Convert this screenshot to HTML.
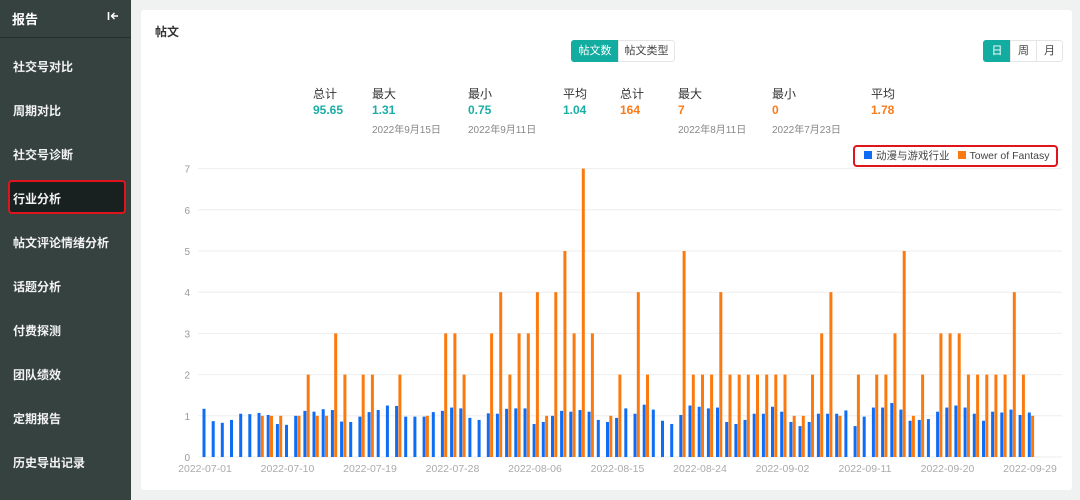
<!DOCTYPE html><html><head><meta charset="utf-8"><style>
*{margin:0;padding:0;box-sizing:border-box}
body{width:1080px;height:500px;overflow:hidden;background:#f0f2f1;font-family:"Liberation Sans","Noto Sans CJK SC",sans-serif;position:relative}
.sb{position:absolute;left:0;top:0;width:131px;height:500px;background:#364240;color:#fff}
.sb .h{position:absolute;left:12px;top:9px;font-size:13px;font-weight:bold}
.sb .ln{position:absolute;left:0;top:37px;width:131px;height:1px;background:#25302e}
.mi{position:absolute;left:13px;font-size:12px;font-weight:bold;color:#f2f2f2}
.act{position:absolute;left:8px;top:180px;width:118px;height:34px;background:#18211f;border:2px solid #e0141c;border-radius:4px}
.card{position:absolute;left:141px;top:10px;width:931px;height:480px;background:#fff;border-radius:3px}
.t{position:absolute;font-size:12px;color:#333}
.btn{position:absolute;top:40px;height:22px;font-size:11px;line-height:20px;text-align:center;border:1px solid #e3e6e5;color:#444;background:#fff}
.on{background:#13aca0;color:#fff;border-color:#13aca0}
.lab{position:absolute;top:85px;font-size:12px;color:#333}
.val{position:absolute;top:103px;font-size:12px;font-weight:bold}
.dt{position:absolute;top:121px;font-size:10px;color:#888}
.b{color:#1aaea5}.o{color:#fb7a1a}
</style></head><body>
<div class="sb"><div class="h">报告</div>
<svg style="position:absolute;left:107px;top:11px" width="12" height="10"><path d="M1.5 1v8" stroke="#fff" stroke-width="1.6"/><path d="M11 5H4.5M7.5 2L4.5 5l3 3" stroke="#fff" stroke-width="1.5" fill="none"/></svg>
<div class="ln"></div>
<div class="act"></div>
<div class="mi" style="top:58px">社交号对比</div>
<div class="mi" style="top:102px">周期对比</div>
<div class="mi" style="top:146px">社交号诊断</div>
<div class="mi" style="top:190px">行业分析</div>
<div class="mi" style="top:234px">帖文评论情绪分析</div>
<div class="mi" style="top:278px">话题分析</div>
<div class="mi" style="top:322px">付费探测</div>
<div class="mi" style="top:366px">团队绩效</div>
<div class="mi" style="top:410px">定期报告</div>
<div class="mi" style="top:454px">历史导出记录</div>
</div>
<div class="card"></div>
<div class="t" style="left:155px;top:23px;font-weight:bold">帖文</div>
<div class="btn on" style="left:571px;width:48px;border-radius:3px 0 0 3px">帖文数</div>
<div class="btn" style="left:618px;width:57px;border-radius:0 3px 3px 0">帖文类型</div>
<div class="btn on" style="left:983px;width:28px;border-radius:3px 0 0 3px">日</div>
<div class="btn" style="left:1010px;width:27px">周</div>
<div class="btn" style="left:1036px;width:27px;border-radius:0 3px 3px 0">月</div>
<div class="lab" style="left:313px">总计</div><div class="val b" style="left:313px">95.65</div>
<div class="lab" style="left:372px">最大</div><div class="val b" style="left:372px">1.31</div><div class="dt" style="left:372px">2022年9月15日</div>
<div class="lab" style="left:468px">最小</div><div class="val b" style="left:468px">0.75</div><div class="dt" style="left:468px">2022年9月11日</div>
<div class="lab" style="left:563px">平均</div><div class="val b" style="left:563px">1.04</div>
<div class="lab" style="left:620px">总计</div><div class="val o" style="left:620px">164</div>
<div class="lab" style="left:678px">最大</div><div class="val o" style="left:678px">7</div><div class="dt" style="left:678px">2022年8月11日</div>
<div class="lab" style="left:772px">最小</div><div class="val o" style="left:772px">0</div><div class="dt" style="left:772px">2022年7月23日</div>
<div class="lab" style="left:871px">平均</div><div class="val o" style="left:871px">1.78</div>
<div style="position:absolute;left:853px;top:145px;width:205px;height:22px;border:2px solid #e0141c;border-radius:4px;font-size:10.5px;color:#444;line-height:18px;white-space:nowrap;overflow:hidden">
<span style="display:inline-block;width:8px;height:8px;background:#0f6cf5;margin:0 4px 0 9px"></span>动漫与游戏行业<span style="display:inline-block;width:8px;height:8px;background:#fb7a0f;margin:0 4px 0 8px"></span>Tower of Fantasy</div>
<svg id="c" style="position:absolute;left:0;top:0" width="1080" height="500"></svg>
<script>
var s='',y0=457,u=41.2;
for(var i=0;i<=7;i++){var y=y0-i*u;s+='<line x1="198" x2="1062" y1="'+y+'" y2="'+y+'" stroke="#eee"/><text x="190" y="'+(y+4)+'" font-size="10" fill="#999" text-anchor="end" font-family="Liberation Sans">'+i+'</text>';}
var bl=[1.17,.87,.83,.9,1.05,1.04,1.07,1.02,.8,.78,1,1.12,1.1,1.16,1.14,.86,.85,.98,1.09,1.14,1.25,1.24,.98,.98,.98,1.09,1.12,1.2,1.18,.95,.9,1.06,1.05,1.17,1.18,1.18,.8,.85,1,1.12,1.1,1.14,1.1,.9,.85,.95,1.18,1.05,1.27,1.15,.88,.8,1.02,1.25,1.22,1.18,1.2,.85,.8,.9,1.05,1.05,1.22,1.1,.85,.75,.85,1.05,1.05,1.05,1.13,.75,.98,1.2,1.2,1.31,1.15,.88,.9,.92,1.1,1.2,1.25,1.2,1.05,.88,1.1,1.08,1.15,1.02,1.08];
var or={6:1,7:1,8:1,10:1,11:2,12:1,13:1,14:3,15:2,17:2,18:2,21:2,24:1,26:3,27:3,28:2,31:3,32:4,33:2,34:3,35:3,36:4,37:1,38:4,39:5,40:3,41:7,42:3,44:1,45:2,47:4,48:2,52:5,53:2,54:2,55:2,56:4,57:2,58:2,59:2,60:2,61:2,62:2,63:2,64:1,65:1,66:2,67:3,68:4,69:1,71:2,73:2,74:2,75:3,76:5,77:1,78:2,80:3,81:3,82:3,83:2,84:2,85:2,86:2,87:2,88:4,89:2,90:1};
for(var d=0;d<91;d++){var x=202.5+d*9.17;var h=bl[d]*u;s+='<rect x="'+x.toFixed(1)+'" y="'+(y0-h)+'" width="3" height="'+h+'" fill="#0f6cf5"/>';if(or[d]){h=or[d]*u;s+='<rect x="'+(x+3.3).toFixed(1)+'" y="'+(y0-h)+'" width="3" height="'+h+'" fill="#fb7a0f"/>';}}
var L=['07-01','07-10','07-19','07-28','08-06','08-15','08-24','09-02','09-11','09-20','09-29'];
for(var k=0;k<L.length;k++){s+='<text x="'+(205+k*82.5)+'" y="472" font-size="10.5" fill="#aaa" text-anchor="middle" font-family="Liberation Sans">2022-'+L[k]+'</text>';}
document.getElementById('c').innerHTML=s;
</script>
<div style="position:absolute;left:1072px;top:0;width:8px;height:500px;background:#f0f2f1"></div>
<div style="position:absolute;left:131px;top:490px;width:949px;height:10px;background:#f0f2f1"></div>
</body></html>
